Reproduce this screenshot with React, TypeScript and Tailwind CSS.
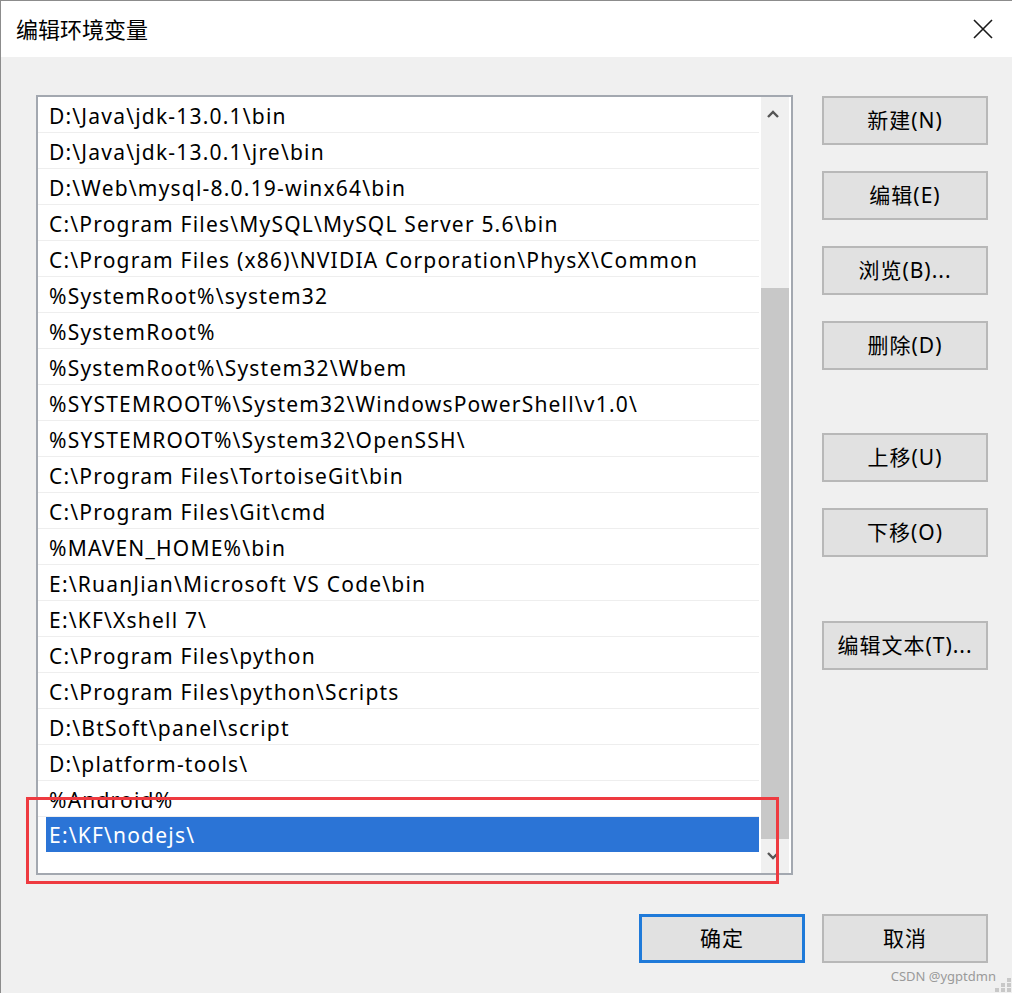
import React from "react";

const paths = [
  "D:\\Java\\jdk-13.0.1\\bin",
  "D:\\Java\\jdk-13.0.1\\jre\\bin",
  "D:\\Web\\mysql-8.0.19-winx64\\bin",
  "C:\\Program Files\\MySQL\\MySQL Server 5.6\\bin",
  "C:\\Program Files (x86)\\NVIDIA Corporation\\PhysX\\Common",
  "%SystemRoot%\\system32",
  "%SystemRoot%",
  "%SystemRoot%\\System32\\Wbem",
  "%SYSTEMROOT%\\System32\\WindowsPowerShell\\v1.0\\",
  "%SYSTEMROOT%\\System32\\OpenSSH\\",
  "C:\\Program Files\\TortoiseGit\\bin",
  "C:\\Program Files\\Git\\cmd",
  "%MAVEN_HOME%\\bin",
  "E:\\RuanJian\\Microsoft VS Code\\bin",
  "E:\\KF\\Xshell 7\\",
  "C:\\Program Files\\python",
  "C:\\Program Files\\python\\Scripts",
  "D:\\BtSoft\\panel\\script",
  "D:\\platform-tools\\",
  "%Android%",
];

const font = { fontFamily: '"Noto Sans", "Noto Sans CJK SC", sans-serif' };

function WinButton({ label, primary = false }: { label: string; primary?: boolean }) {
  return (
    <button
      type="button"
      className={
        primary
          ? "flex h-[49px] w-[166px] items-center justify-center border-[3px] border-[#1f7ad9] bg-[#e1e1e1] text-[21px] tracking-[1px] text-black"
          : "flex h-[49px] w-[166px] items-center justify-center border-2 border-[#b8b8b8] bg-[#e1e1e1] text-[21px] tracking-[1px] text-black"
      }
    >
      {label}
    </button>
  );
}

export default function App() {
  return (
    <div
      className="relative flex h-[993px] w-[1012px] flex-col overflow-hidden border-l border-t border-[#8c8c8c] bg-[#f0f0f0]"
      style={font}
    >
      {/* Title bar */}
      <div className="flex h-[56px] items-center justify-between bg-white pl-[15px] pr-[19px]">
        <span className="text-[22px] text-black">编辑环境变量</span>
        <svg width="20" height="20" viewBox="0 0 20 20" fill="none" stroke="#1a1a1a" strokeWidth="1.6">
          <path d="M1 1l18 18M19 1L1 19" />
        </svg>
      </div>

      <div className="flex flex-1 flex-col pl-[35px] pr-[24px] pt-[38px]">
        <div className="flex">
          {/* List box */}
          <div className="flex h-[780px] w-[757px] border-2 border-[#a3a8b0] bg-white">
            <div className="flex min-w-0 flex-1 flex-col">
              {paths.map((p) => (
                <div
                  key={p}
                  className="flex h-[36px] shrink-0 items-center whitespace-nowrap border-b border-[#eeeeee] pl-[11px] pt-[3px] text-[21px] leading-none tracking-[1.2px] text-black"
                >
                  {p}
                </div>
              ))}
              <div className="ml-[8px] flex h-[35px] items-center whitespace-nowrap bg-[#2b74d6] pl-[3px] pt-[2px] text-[21px] leading-none tracking-[1.2px] text-white">
                E:\KF\nodejs\
              </div>
            </div>

            {/* Scrollbar */}
            <div className="ml-[2px] mr-[2px] flex w-[28px] shrink-0 flex-col bg-[#f0f0f0]">
              <div className="flex h-[34px] items-center justify-center pr-[4px]">
                <svg width="14" height="10" viewBox="0 0 14 10" fill="none" stroke="#555555" strokeWidth="2.4">
                  <path d="M2 8l5-5 5 5" />
                </svg>
              </div>
              <div className="h-[157px]" />
              <div className="h-[551px] bg-[#c8c8c8]" />
              <div className="flex flex-1 items-center justify-center pr-[4px]">
                <svg width="14" height="10" viewBox="0 0 14 10" fill="none" stroke="#555555" strokeWidth="2.4">
                  <path d="M2 2l5 5 5-5" />
                </svg>
              </div>
            </div>
          </div>

          {/* Side buttons */}
          <div className="ml-[29px] flex flex-col pt-[1px]">
            <WinButton label="新建(N)" />
            <div className="mt-[26px]">
              <WinButton label="编辑(E)" />
            </div>
            <div className="mt-[26px]">
              <WinButton label="浏览(B)..." />
            </div>
            <div className="mt-[26px]">
              <WinButton label="删除(D)" />
            </div>
            <div className="mt-[63px]">
              <WinButton label="上移(U)" />
            </div>
            <div className="mt-[26px]">
              <WinButton label="下移(O)" />
            </div>
            <div className="mt-[64px]">
              <WinButton label="编辑文本(T)..." />
            </div>
          </div>
        </div>

        {/* Bottom buttons */}
        <div className="mt-[39px] flex justify-end gap-[17px]">
          <WinButton label="确定" primary />
          <WinButton label="取消" />
        </div>
      </div>

      {/* Red annotation box */}
      <div className="absolute left-[25px] top-[796px] h-[87px] w-[753px] border-[3px] border-[#ee3a40]" />

      {/* Watermark */}
      <div className="absolute bottom-[7px] right-[16px] text-[13px] text-[#9a9a9a]">CSDN @ygptdmn</div>

      {/* Resize grip */}
      <svg className="absolute bottom-0 right-0" width="18" height="18" viewBox="0 0 18 18" fill="#c8c8c8">
        <rect x="13" y="3" width="4" height="4" />
        <rect x="7" y="8" width="4" height="4" />
        <rect x="13" y="8" width="4" height="4" />
        <rect x="1" y="13" width="4" height="4" />
        <rect x="7" y="13" width="4" height="4" />
        <rect x="13" y="13" width="4" height="4" />
      </svg>
    </div>
  );
}
